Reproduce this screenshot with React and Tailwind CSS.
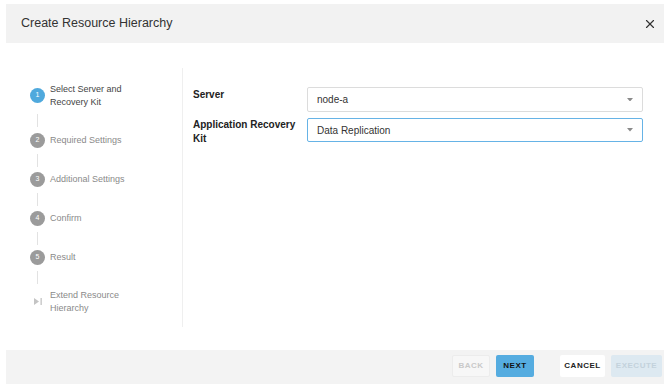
import { X } from 'lucide-react'

const steps = [
  { n: 1, label: ['Select Server and', 'Recovery Kit'], active: true },
  { n: 2, label: ['Required Settings'] },
  { n: 3, label: ['Additional Settings'] },
  { n: 4, label: ['Confirm'] },
  { n: 5, label: ['Result'] },
]

function Connector({ first }) {
  return (
    <div className={`pl-[31px] pt-[6px] ${first ? 'h-[25px]' : 'h-[24px]'}`}>
      <div className="w-px h-[13px] bg-[#e2e2e2]" />
    </div>
  )
}

function Caret() {
  return (
    <svg width="6" height="3.5" viewBox="0 0 6 3.5" className="shrink-0">
      <path d="M0 0 L6 0 L3 3.5 Z" fill="#8a8a8a" />
    </svg>
  )
}

function Select({ value, focused }) {
  return (
    <div
      className={`w-[336px] flex items-center justify-between pl-[9px] pr-[9px] rounded-[2px] bg-white text-[10px] text-[#333] ${
        focused ? 'h-[24px] border border-[#66b3e6]' : 'h-[25px] border border-[#dcdcdc]'
      }`}
    >
      <span>{value}</span>
      <Caret />
    </div>
  )
}

export default function App() {
  return (
    <div
      className="w-[664px] h-[384px] bg-white pl-[6px] pt-[4px] flex flex-col overflow-hidden"
      style={{ fontFamily: '"Liberation Sans", Arial, sans-serif' }}
    >
      {/* Header */}
      <div className="h-[39px] bg-[#f2f2f2] flex items-center justify-between pl-[15px] pr-[7px] shrink-0">
        <span className="text-[12.5px] text-[#333]">Create Resource Hierarchy</span>
        <X size={14} strokeWidth={2} className="text-[#333]" />
      </div>

      {/* Body */}
      <div className="flex-1 flex pt-[25px]">
        {/* Steps */}
        <div className="w-[177px] h-[259px] border-r border-[#efefef] pt-[15px] shrink-0">
          {steps.map((s, i) => (
            <div key={s.n}>
              {i > 0 && <Connector first={i === 1} />}
              <div className={`flex items-center gap-[5px] pl-[24px] ${s.label.length > 1 ? 'h-[25px]' : 'h-[15px]'}`}>
                <div
                  className={`w-[15px] h-[15px] rounded-full flex items-center justify-center text-[7px] text-white shrink-0 ${
                    s.active ? 'bg-[#4fa9dd]' : 'bg-[#9b9b9b]'
                  }`}
                >
                  {s.n}
                </div>
                <div className={`text-[9px] leading-[12.5px] ${s.active ? 'text-[#444]' : 'text-[#8a8a8a]'}`}>
                  {s.label.map(l => (
                    <div key={l}>{l}</div>
                  ))}
                </div>
              </div>
            </div>
          ))}
          <Connector />
          <div className="flex items-center gap-[5px] pl-[24px] h-[25px]">
            <div className="w-[15px] flex justify-center shrink-0">
              <svg width="8" height="7" viewBox="0 0 8 7">
                <path d="M0 0 L5 3.5 L0 7 Z" fill="#c4c4c4" />
                <rect x="6.5" y="0" width="1.3" height="7" fill="#c4c4c4" />
              </svg>
            </div>
            <div className="text-[9px] leading-[12.5px] text-[#8a8a8a]">
              <div>Extend Resource</div>
              <div>Hierarchy</div>
            </div>
          </div>
        </div>

        {/* Form */}
        <div className="flex-1 pl-[10px] pt-[19px] flex flex-col gap-[6px]">
          <div className="flex">
            <div className="w-[114px] pt-[1px] text-[10px] font-bold leading-[14px] text-[#222]">Server</div>
            <Select value="node-a" />
          </div>
          <div className="flex">
            <div className="w-[114px] text-[10px] font-bold leading-[14px] text-[#222]">
              Application Recovery
              <br />
              Kit
            </div>
            <Select value="Data Replication" focused />
          </div>
        </div>
      </div>

      {/* Footer */}
      <div className="h-[34px] bg-[#f3f3f3] flex items-start justify-end pt-[5px] pr-[2px] shrink-0">
        <div className="flex gap-[6px]">
          <button className="w-[38px] h-[22px] rounded-[2px] bg-[#f7f7f7] border border-[#ececec] text-[8px] font-bold tracking-[0.5px] text-[#c9c9c9]">
            BACK
          </button>
          <button className="w-[38px] h-[22px] rounded-[2px] bg-[#55ace0] text-[8px] font-bold tracking-[0.5px] text-[#111]">
            NEXT
          </button>
        </div>
        <div className="flex gap-[6px] ml-[26px]">
          <button className="w-[45px] h-[22px] rounded-[2px] bg-white text-[8px] font-bold tracking-[0.5px] text-[#222]">
            CANCEL
          </button>
          <button className="w-[51px] h-[22px] rounded-[2px] bg-[#dde9f1] text-[8px] font-bold tracking-[0.5px] text-[#c3d2dc]">
            EXECUTE
          </button>
        </div>
      </div>
    </div>
  )
}
